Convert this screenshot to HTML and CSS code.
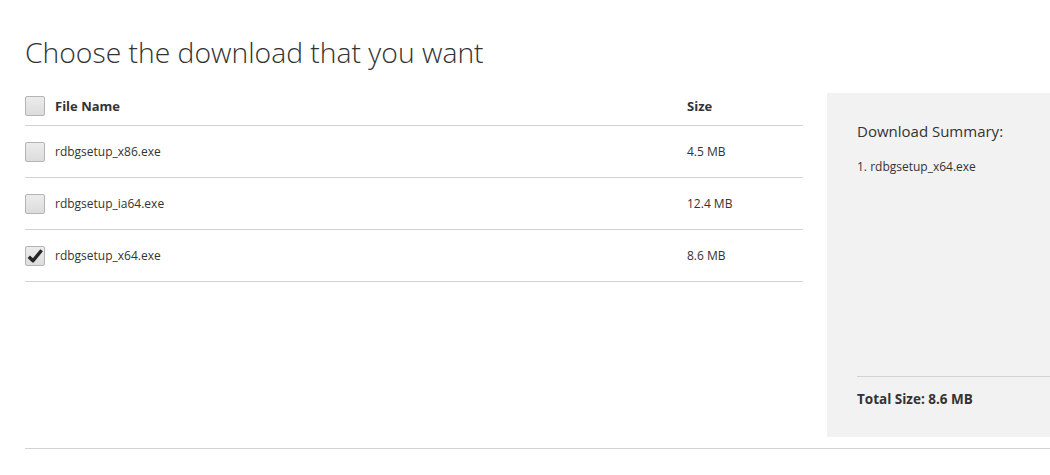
FILE: index.html
```html
<!DOCTYPE html>
<html lang="en">
  <head>
    <meta charset="utf-8">
    <title>Choose the download that you want</title>
    <link rel="stylesheet" href="styles.css">
  </head>
  <body>
    <section class="page">
      <h1>Choose the download that you want</h1>

      <div class="main">
        <div class="files">
          <div class="row head">
            <span class="check"></span>
            <span class="name">File Name</span>
            <span class="size">Size</span>
          </div>
          <div class="row">
            <span class="check"></span>
            <span class="name">rdbgsetup_x86.exe</span>
            <span class="size">4.5 MB</span>
          </div>
          <div class="row">
            <span class="check"></span>
            <span class="name">rdbgsetup_ia64.exe</span>
            <span class="size">12.4 MB</span>
          </div>
          <div class="row">
            <span class="check checked">
              <svg viewBox="0 0 20 20" width="20" height="20"><path d="M3.8 10.8 L8 14.8 L16.6 4.2" fill="none" stroke="#262626" stroke-width="3.4" stroke-linejoin="round"/></svg>
            </span>
            <span class="name">rdbgsetup_x64.exe</span>
            <span class="size">8.6 MB</span>
          </div>
        </div>

        <aside class="summary">
          <h2>Download Summary:</h2>
          <ol>
            <li>1. rdbgsetup_x64.exe</li>
          </ol>
          <div class="total">Total Size: 8.6 MB</div>
        </aside>
      </div>

      <div class="bottom"></div>
    </section>
  </body>
</html>
```

FILE: styles.css
```css
body {
  margin: 0;
  font-family: "Open Sans", "Noto Sans", sans-serif;
  color: #333;
  background: #fff;
}
.page {
  padding-left: 25px;
}
h1 {
  margin: 0;
  padding-top: 34px;
  font-size: 28.3px;
  font-weight: 300;
  line-height: 36px;
  color: #333;
}
.main {
  display: flex;
  gap: 24px;
  margin-top: 23px;
}
.files {
  width: 778px;
  flex: none;
}
.row {
  display: flex;
  align-items: center;
  height: 51px;
  border-bottom: 1px solid #d2d2d2;
  font-size: 12px;
}
.row.head {
  height: 29px;
  padding-top: 3px;
  align-items: flex-start;
  font-weight: 700;
  font-size: 13px;
  line-height: 20px;
}
.check {
  box-sizing: border-box;
  width: 20px;
  height: 20px;
  border: 1px solid #b4b4b4;
  border-radius: 2px;
  background: linear-gradient(#ececec, #dcdcdc);
  flex: none;
}
.check svg {
  display: block;
  margin: -1px;
}
.name {
  margin-left: 10px;
  width: 622px;
}
.size {
  margin-left: 10px;
}
.summary {
  flex: 1;
  min-height: 344px;
  background: #f2f2f2;
  display: flex;
  flex-direction: column;
}
.summary h2 {
  margin: 28px 0 0 30px;
  font-size: 15px;
  font-weight: 400;
  line-height: 20px;
}
.summary ol {
  list-style: none;
  margin: 17px 0 0 30px;
  padding: 0;
  font-size: 12px;
  line-height: 18px;
}
.total {
  margin: auto 0 0 30px;
  border-top: 1px solid #d2d2d2;
  padding: 13px 0 29px;
  font-size: 13.5px;
  font-weight: 700;
  line-height: 18px;
}
.bottom {
  margin-top: 11px;
  border-top: 1px solid #d2d2d2;
}
```
